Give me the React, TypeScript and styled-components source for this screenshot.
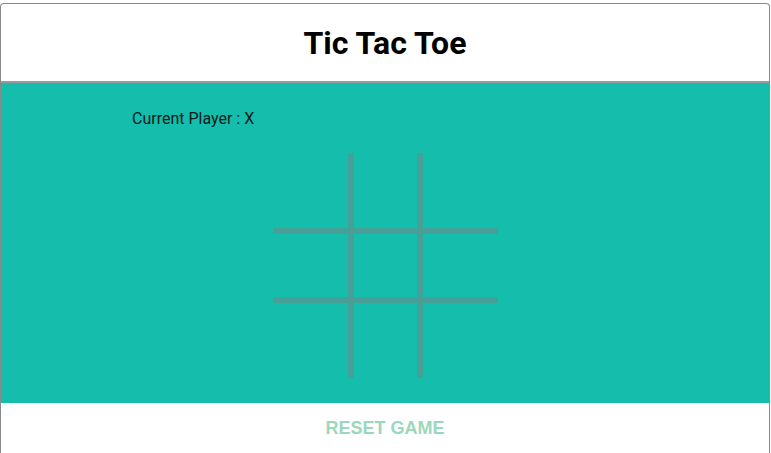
import React, { useState } from 'react'
import styled, { createGlobalStyle } from 'styled-components'

const GlobalStyle = createGlobalStyle`
    html, body {
        margin:0;
        padding:0;
        background:white;
        font-family:Roboto, "Liberation Sans", sans-serif;
    }
`
const Card = styled.main`
    margin-top:3px;
    width:770px;
    height:460px;
    border:1px solid #8a8a8a;
    border-bottom:none;
    border-radius:4px 4px 0 0;
    box-sizing:border-box;
    display:flex;
    flex-direction:column;
    overflow:hidden;
`
const Header = styled.header`
    height:79px;
    flex-shrink:0;
    display:flex;
    align-items:center;
    justify-content:center;
    border-bottom:2px solid #9a9a9a;
    box-sizing:border-box;
`
const Title = styled.h1`
    margin:0;
    font-size:32px;
    font-weight:700;
    color:#000;
`
const Board = styled.section`
    height:320px;
    flex-shrink:0;
    background:#15bdac;
    padding:26px 0 0 131px;
    box-sizing:border-box;
`
const Status = styled.div`
    font-size:16px;
    color:#0a1a18;
    line-height:20px;
`
const Grid = styled.div`
    margin:24px 0 0 141px;
    display:grid;
    grid-template-columns:repeat(3, 75px);
    grid-template-rows:repeat(3, 75px);
`
const Cell = styled.button<{ middleRow: boolean; middleCol: boolean }>`
    border:0 solid #479f97;
    border-left-width:${p => p.middleCol ? '6px' : '0'};
    border-right-width:${p => p.middleCol ? '6px' : '0'};
    border-top-width:${p => p.middleRow ? '6px' : '0'};
    border-bottom-width:${p => p.middleRow ? '6px' : '0'};
    background:transparent;
    padding:0;
    font-family:Roboto, sans-serif;
    font-size:40px;
    font-weight:700;
    color:#fff;
    cursor:pointer;
    box-sizing:border-box;
`
const Footer = styled.footer`
    flex:1;
    display:flex;
    justify-content:center;
    padding-top:15px;
`
const ResetButton = styled.button`
    border:none;
    background:none;
    padding:0;
    font-family:"Liberation Sans", Arial, sans-serif;
    font-size:18px;
    font-weight:700;
    color:#9ad8bb;
    cursor:pointer;
    height:20px;
    line-height:20px;
`

export default function App() {
    const [cells, setCells] = useState<string[]>(Array(9).fill(''))
    const [player, setPlayer] = useState('X')

    const play = (i: number) => {
        if (cells[i]) return
        const next = cells.slice()
        next[i] = player
        setCells(next)
        setPlayer(player === 'X' ? 'O' : 'X')
    }

    return (
        <>
            <GlobalStyle />
            <Card>
                <Header>
                    <Title>Tic Tac Toe</Title>
                </Header>
                <Board>
                    <Status>Current Player : {player}</Status>
                    <Grid>
                        {cells.map((value, i) => (
                            <Cell
                                key={i}
                                middleRow={Math.floor(i / 3) === 1}
                                middleCol={i % 3 === 1}
                                onClick={() => play(i)}
                            >
                                {value}
                            </Cell>
                        ))}
                    </Grid>
                </Board>
                <Footer>
                    <ResetButton onClick={() => { setCells(Array(9).fill('')); setPlayer('X') }}>
                        RESET GAME
                    </ResetButton>
                </Footer>
            </Card>
        </>
    )
}
